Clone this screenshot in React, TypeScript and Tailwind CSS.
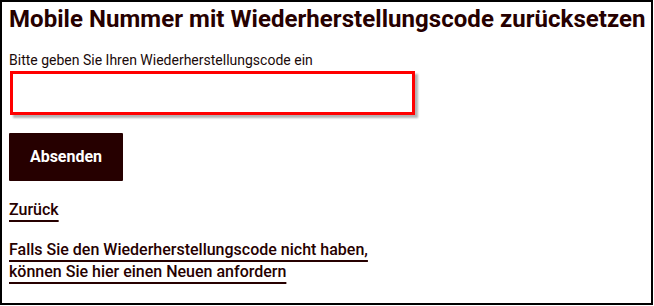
export default function App() {
  return (
    <div className="w-[653px] h-[305px] border-2 border-black bg-white font-['Roboto',sans-serif] text-[#260000]">
      <div className="pl-[7px] pt-[1px]">
        <h1 className="text-[24px] leading-[32px] font-bold tracking-[0.05px]">
          Mobile Nummer mit Wiederherstellungscode zurücksetzen
        </h1>
        <label className="block mt-[17px] text-[14px] leading-[16px] text-[#1a0a0a]">
          Bitte geben Sie Ihren Wiederherstellungscode ein
        </label>
        <input
          type="text"
          className="block mt-[3px] ml-[1px] w-[405px] h-[44px] border-[3px] border-[#ff0000] shadow-[3px_3px_2px_rgba(0,0,0,0.3)] outline-none"
        />
        <button className="block mt-[18px] w-[114px] h-[48px] bg-[#260000] text-white text-[16px] font-bold rounded-[1px]">
          Absenden
        </button>
        <div className="mt-[18px] flex flex-col gap-[18px] text-[16px] font-medium">
          <a href="#" className="leading-[22px] underline decoration-2 underline-offset-[5px] self-start">
            Zurück
          </a>
          <a href="#" className="leading-[22px] underline decoration-2 underline-offset-[5px] w-[370px]">
            Falls Sie den Wiederherstellungscode nicht haben, können Sie hier einen Neuen anfordern
          </a>
        </div>
      </div>
    </div>
  );
}
